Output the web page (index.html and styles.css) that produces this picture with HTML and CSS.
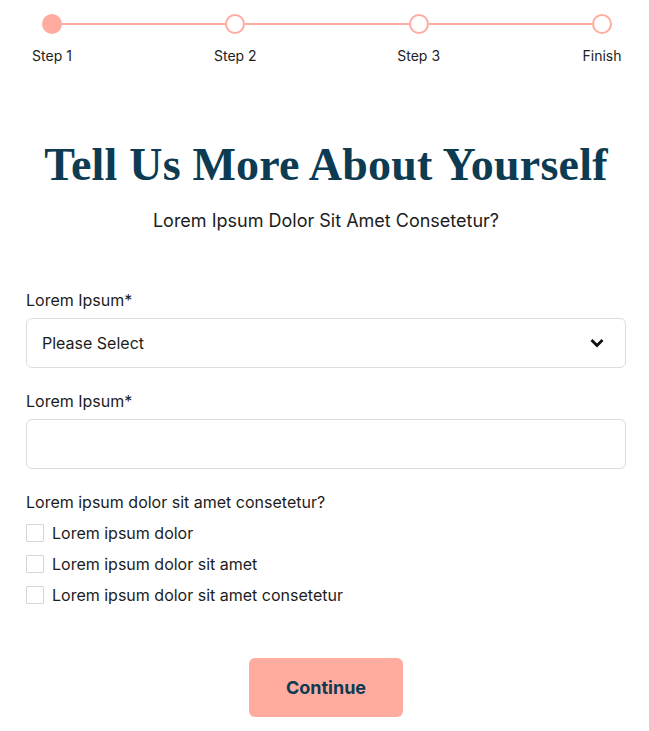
FILE: index.html
```html
<!DOCTYPE html>
<html lang="en">
<head>
    <meta charset="UTF-8">
    <title>Tell Us More About Yourself</title>
    <link rel="stylesheet" href="styles.css">
</head>
<body>
    <div class="page">
        <div class="stepper">
            <div class="track"></div>
            <div class="step active"><span class="dot"></span><span class="step-label">Step 1</span></div>
            <div class="step"><span class="dot"></span><span class="step-label">Step 2</span></div>
            <div class="step"><span class="dot"></span><span class="step-label">Step 3</span></div>
            <div class="step"><span class="dot"></span><span class="step-label">Finish</span></div>
        </div>

        <h1>Tell Us More About Yourself</h1>
        <p class="subtitle">Lorem Ipsum Dolor Sit Amet Consetetur?</p>

        <form class="form">
            <div class="field">
                <label>Lorem Ipsum*</label>
                <div class="select">
                    <span>Please Select</span>
                    <svg width="14" height="10" viewBox="0 0 14 10"><path d="M1.5 2 L7 7.5 L12.5 2" fill="none" stroke="#111" stroke-width="2.8"/></svg>
                </div>
            </div>
            <div class="field">
                <label>Lorem Ipsum*</label>
                <input type="text">
            </div>
            <div class="field checks">
                <p class="question">Lorem ipsum dolor sit amet consetetur?</p>
                <label class="check"><span class="box"></span>Lorem ipsum dolor</label>
                <label class="check"><span class="box"></span>Lorem ipsum dolor sit amet</label>
                <label class="check"><span class="box"></span>Lorem ipsum dolor sit amet consetetur</label>
            </div>
            <div class="actions">
                <button type="button">Continue</button>
            </div>
        </form>
    </div>
</body>
</html>
```

FILE: styles.css
```css
body {margin: 0; background: #fff; font-family: Inter, "Noto Sans", sans-serif; color: #1c1c1c}
.page {padding: 14px 23px 0 26px}
.stepper {position: relative; display: flex; justify-content: space-between; margin-right: -2px}
.track {position: absolute; left: 26px; right: 26px; top: 9px; height: 2px; background: #ffaba0}
.step {position: relative; width: 52px; display: flex; flex-direction: column; align-items: center}
.dot {width: 16px; height: 16px; border: 2px solid #ffaba0; border-radius: 50%; background: #fff}
.step.active .dot {background: #ffaba0}
.step-label {margin-top: 13px; font-size: 14px; color: #222}
h1 {margin: 74px 0 0; text-align: center; font-family: "Liberation Serif", serif; font-size: 46px; line-height: 54px; font-weight: bold; color: #0d3b52; letter-spacing: 0.2px}
.subtitle {margin: 18px 0 0; text-align: center; font-size: 18px; line-height: 22px; color: #1c1c1c}
.form {margin-top: 58px}
.field {margin-bottom: 23px}
.field label {display: block; font-size: 16px; line-height: 20px; margin-bottom: 8px}
.select, input {box-sizing: border-box; width: 100%; height: 50px; border: 1px solid #ddd; border-radius: 6px; background: #fff}
.select {display: flex; align-items: center; justify-content: space-between; padding: 0 21px 0 15px; font-size: 16px}
input {display: block; padding: 0 15px; font: inherit}
.question {margin: 0 0 11px; font-size: 16px; line-height: 20px}
.field .check {display: flex; align-items: center; gap: 8px; margin: 0 0 11px; font-size: 16px; line-height: 20px}
.box {width: 16px; height: 16px; border: 1px solid #d6d6d6; border-radius: 1px}
.actions {display: flex; justify-content: center; margin-top: 53px}
button {width: 154px; height: 59px; border: none; border-radius: 6px; background: #ffaba0; color: #0d3b52; font-family: Inter, sans-serif; font-size: 18px; font-weight: bold; cursor: pointer}
```
